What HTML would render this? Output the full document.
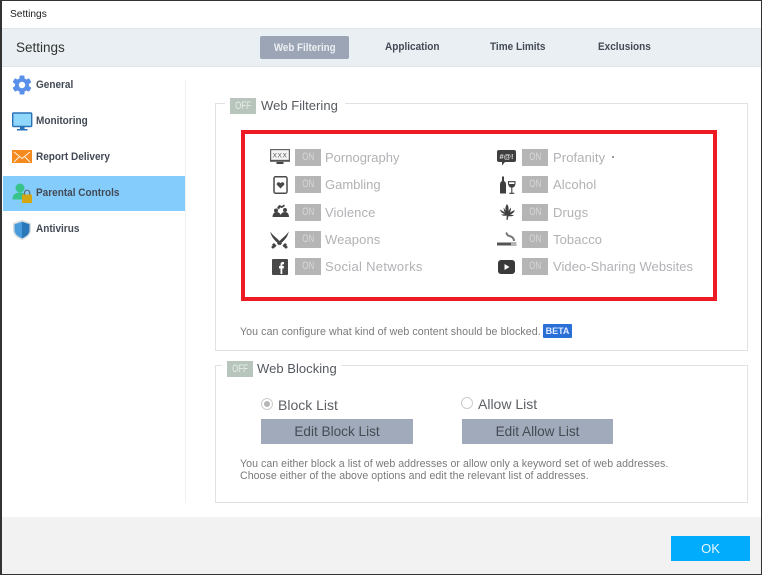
<!DOCTYPE html>
<html><head><meta charset="utf-8"><title>Settings</title>
<style>
html,body{margin:0;padding:0;background:#fff}
#w{position:relative;width:768px;height:576px;overflow:hidden;background:#fff;font-family:"Liberation Sans",sans-serif;filter:blur(.3px)}
#w div,#w svg{position:absolute}
.t{white-space:nowrap;line-height:16px;height:16px}
.nav,.tab{font-weight:bold;font-size:11px;color:#434a55;transform:scaleX(.91);transform-origin:left center}
.on{width:26px;height:17px;background:#b5b5b5;color:#d8d8d8;font-size:11px;line-height:17px;text-align:center}
.off{width:26px;height:16px;background:#b7c5bc;color:#e8eee9;font-size:11px;line-height:16px;text-align:center}
.on span,.off span{display:inline-block;transform:scaleX(.72)}
.l{font-size:13px;color:#b2b2b6;top:0;letter-spacing:.1px;margin-top:1px}
.c{font-size:10.6px;color:#7a7a7a;letter-spacing:.04px}
.lg{font-size:13px;color:#555a60;letter-spacing:.04px}
.b{background:#a0aaba;color:#454b55;font-size:13.6px;text-align:center;height:25px;line-height:25px;width:152px}
.g{background:#fff}
</style></head><body><div id="w">
<div style="left:0;top:0;width:762px;height:1px;background:#333"></div>
<div style="left:0;top:0;width:2px;height:575px;background:#333"></div>
<div style="left:761px;top:0;width:1px;height:575px;background:#333"></div>
<div style="left:0;top:574px;width:762px;height:1px;background:#333"></div>
<div class="t" style="left:10px;top:7px;font-size:10.2px;color:#222">Settings</div>

<div style="left:2px;top:28px;width:759px;height:37px;background:#e9eff2;border-top:1px solid #dfe5e8;border-bottom:1px solid #dfe5e8"></div>
<div class="t" style="left:16px;top:40px;font-size:13.5px;color:#333">Settings</div>
<div style="left:260px;top:36px;width:89px;height:23px;background:#9ba5b6;border-radius:2px;color:#eef0f3;font-weight:bold;font-size:11px;line-height:24px;text-align:center"><span style="display:inline-block;transform:scaleX(.89)">Web Filtering</span></div>
<div class="t tab" style="left:385px;top:39px">Application</div>
<div class="t tab" style="left:490px;top:39px">Time Limits</div>
<div class="t tab" style="left:598px;top:39px">Exclusions</div>

<!-- sidebar -->
<div style="left:3px;top:176px;width:182px;height:35px;background:#84ccfb"></div>
<div style="left:185px;top:80px;width:1px;height:423px;background:#f0f0f0"></div>
<svg style="left:12px;top:75px" width="20" height="20" viewBox="0 0 20 20"><g fill="#5a90ea"><g id="gt"><rect x="7.500" y="0.500" width="5" height="19" rx="1"/><rect x="7.500" y="0.500" width="5" height="19" rx="1" transform="rotate(60 10 10)"/><rect x="7.500" y="0.500" width="5" height="19" rx="1" transform="rotate(120 10 10)"/></g><circle cx="10" cy="10" r="7"/></g><circle cx="10" cy="10" r="3.200" fill="#fff"/></svg>
<div class="t nav" style="left:36px;top:77px">General</div>
<svg style="left:12px;top:112px" width="21" height="20" viewBox="0 0 21 20"><rect x="0.700" y="1" width="19" height="13.500" rx="1" fill="#8fd8fb" stroke="#2a72b8" stroke-width="1.400"/><path fill="#2a72b8" d="M8 15h4.500v2H15.500v1.500H5V17H8z"/></svg>
<div class="t nav" style="left:36px;top:113px">Monitoring</div>
<svg style="left:12px;top:150px" width="20" height="14" viewBox="0 0 20 14"><rect width="20" height="13" fill="#f58a1f"/><path d="M2 2l8 6.500L18 2M2 12l5.500-5.500M18 12l-5.500-5.500" fill="none" stroke="#fff0e0" stroke-width="1"/></svg>
<div class="t nav" style="left:36px;top:149px">Report Delivery</div>
<svg style="left:12px;top:183px" width="21" height="21" viewBox="0 0 21 21"><circle cx="8" cy="5" r="4.500" fill="#36c48c"/><path fill="#36c48c" d="M0.500 16.500c0-5 3-7 7.500-7 2 0 3.500.5 4.500 1.500V16.500z"/><path d="M12.500 12V9.800a2.600 2.600 0 0 1 5.200 0V12" fill="none" stroke="#5a6a70" stroke-width="1.200"/><rect x="10" y="11.500" width="10" height="8.500" fill="#d4a514"/></svg>
<div class="t nav" style="left:36px;top:185px">Parental Controls</div>
<svg style="left:13px;top:220px" width="18" height="20" viewBox="0 0 18 20"><path fill="#d8dde0" d="M9 0l9 3v7c0 5-4 8-9 10-5-2-9-5-9-10V3z"/><path fill="#4a9bdb" d="M9 1.800l7.500 2.400V10c0 4-3.200 6.500-7.500 8.300C4.700 16.500 1.500 14 1.500 10V4.200z"/><path fill="#2a78ba" d="M9 1.800l7.500 2.400V10c0 4-3.200 6.500-7.500 8.300z"/></svg>
<div class="t nav" style="left:36px;top:221px">Antivirus</div>

<!-- web filtering -->
<div style="left:215px;top:103px;width:531px;height:246px;border:1px solid #e2e2e2"></div>
<div class="g" style="left:225px;top:98px;width:120px;height:12px"></div>
<div class="off" style="left:230px;top:98px"><span>OFF</span></div>
<div class="t lg" style="left:261px;top:98px">Web Filtering</div>

<div style="left:241px;top:130px;width:468px;height:163px;border:4px solid #ed1c24"></div>

<svg style="left:270px;top:149px" width="20" height="16" viewBox="0 0 20 16"><rect x=".6" y=".6" width="18.800" height="10.800" fill="#f4f4f4" stroke="#666" stroke-width="1.200"/><text x="10" y="8.500" font-size="6.500" font-family="Liberation Sans" text-anchor="middle" fill="#555" letter-spacing=".6">XXX</text><rect x="0" y="11" width="20" height="1.800" fill="#555"/><path d="M6.500 13h7v2h-7z" fill="#444"/></svg>
<div class="on" style="left:295px;top:149px"><span>ON</span></div><div class="t l" style="left:325px;top:149px;letter-spacing:0">Pornography</div>
<svg style="left:273px;top:176px" width="15" height="18" viewBox="0 0 15 18"><rect x="1" y=".8" width="13" height="16.400" rx="1.500" fill="#fff" stroke="#4a4a4a" stroke-width="1.500"/><path fill="#4a4a4a" d="M7.500 12.500L3.800 8.800C3 6.800 5.800 5 7.500 7.200 9.200 5 12 6.800 11.200 8.800z"/></svg>
<div class="on" style="left:295px;top:176px"><span>ON</span></div><div class="t l" style="left:325px;top:176px;letter-spacing:0">Gambling</div>
<svg style="left:272px;top:204px" width="17" height="15" viewBox="0 0 17 15"><g fill="#444"><circle cx="4" cy="6.500" r="2"/><path d="M.5 13c0-3 1.800-5 4-5s4 1.500 4 3.500V13z"/><circle cx="13" cy="6" r="2"/><path d="M8 13c0-3 2.500-5 5-5s4 2 4 5z"/><path d="M5 4l2-3 3 1 2-1.500 1 1.500-3 2-2-.5-1 2z"/></g></svg>
<div class="on" style="left:295px;top:204px"><span>ON</span></div><div class="t l" style="left:325px;top:204px">Violence</div>
<svg style="left:270px;top:231px" width="19" height="18" viewBox="0 0 19 18"><g fill="#444"><path d="M.3 .5C2.500 4 6 6.500 8.500 9l3.500 3.500-1.800 1.800L6.500 11C3.500 8 1 5 .3 .5z"/><path d="M18.700 .5C16.500 4 13 6.500 10.500 9L7 12.500l1.800 1.800L12.500 11C15.500 8 18 5 18.700 .5z"/><path d="M2 13.500l2-1.500 2.500 2.500-1.500 2zM17 13.500l-2-1.500-2.500 2.500 1.500 2z"/><circle cx="3" cy="16" r="1.500"/><circle cx="16" cy="16" r="1.500"/></g></svg>
<div class="on" style="left:295px;top:231px"><span>ON</span></div><div class="t l" style="left:325px;top:231px">Weapons</div>
<svg style="left:272px;top:259px" width="16" height="16" viewBox="0 0 16 16"><rect width="16" height="16" rx="1" fill="#484848"/><path fill="#fff" d="M8.500 15V9.500H7V7h1.500V5.500C8.500 3.700 9.500 3 11 3H12V5.200h-.8c-.7 0-.9.300-.9.900V7H12l-.3 2.500h-1.400V15z"/></svg>
<div class="on" style="left:295px;top:258px"><span>ON</span></div><div class="t l" style="left:325px;top:258px;letter-spacing:.3px">Social Networks</div>

<svg style="left:497px;top:149px" width="19" height="18" viewBox="0 0 19 18"><path fill="#3f3f3f" d="M2 1h15A2 2 0 0 1 19 3v8a2 2 0 0 1-2 2H8l-3 3.500V13H2A2 2 0 0 1 0 11V3A2 2 0 0 1 2 1z"/><text x="9.500" y="10" font-size="7.500" font-weight="bold" font-family="Liberation Sans" text-anchor="middle" fill="#ddd">#@!</text></svg>
<div class="on" style="left:522px;top:149px"><span>ON</span></div><div class="t l" style="left:553px;top:149px">Profanity</div>
<div style="left:612px;top:156px;width:2px;height:2px;background:#777;border-radius:50%"></div>
<svg style="left:499px;top:176px" width="17" height="18" viewBox="0 0 17 18"><path fill="#3f3f3f" d="M3 .500h2V5c1.500.8 2 2 2 3.500V17.500H1V8.500C1 7 1.500 5.800 3 5z"/><path fill="none" stroke="#3f3f3f" stroke-width="1.100" d="M9.500 5.700h6.500c.300 3.500-1 5.300-3.200 5.300S9.200 9.200 9.500 5.700zM12.800 11v6M10.300 17.300h5"/><path fill="#3f3f3f" d="M10 8h5.500c-.3 1.800-1.200 2.800-2.700 2.800S10.300 9.800 10 8z"/></svg>
<div class="on" style="left:522px;top:176px"><span>ON</span></div><div class="t l" style="left:553px;top:176px">Alcohol</div>
<svg style="left:498px;top:204px" width="18" height="16" viewBox="0 0 18 16"><path fill="#3f3f3f" d="M9 0c1.500 2 2 4.500 1.300 7L13 3.500c.2 1.800-.3 3.800-1.300 5l5-2.500c-.5 2.500-2.500 4-4.800 4.500l4.300.8c-1.800 1-4 1.300-5.700.7L9.500 16h-1l.2-4.500c-1.700.6-3.900.3-5.700-.7l4.300-.8C4.500 9.500 2.500 8 2 5.500l5 3C6 7.300 5.500 5.300 5.700 3.500L7.700 7C7 4.500 7.500 2 9 0z"/></svg>
<div class="on" style="left:522px;top:204px"><span>ON</span></div><div class="t l" style="left:553px;top:204px">Drugs</div>
<svg style="left:497px;top:231px" width="20" height="17" viewBox="0 0 20 17"><rect x="0" y="11.500" width="14" height="3" fill="#555"/><rect x="14" y="11" width="5.500" height="4" fill="#b5b5b5"/><path d="M10 1.500c-1 1.500.5 3 2.500 3.500s4.500 1.500 4.500 5" fill="none" stroke="#777" stroke-width="2"/></svg>
<div class="on" style="left:522px;top:231px"><span>ON</span></div><div class="t l" style="left:553px;top:231px">Tobacco</div>
<svg style="left:498px;top:260px" width="17" height="14" viewBox="0 0 17 14"><rect width="17" height="14" rx="3" fill="#3a3a3a"/><path fill="#fff" d="M6.500 4l5 3-5 3z"/></svg>
<div class="on" style="left:522px;top:258px"><span>ON</span></div><div class="t l" style="left:553px;top:258px;letter-spacing:.05px">Video-Sharing Websites</div>

<div class="t c" style="left:240px;top:324px;letter-spacing:.09px">You can configure what kind of web content should be blocked.</div>
<div style="left:543px;top:324px;width:29px;height:14px;background:#2a6fd6;border-radius:1px;color:#dfeaff;font-weight:bold;font-size:9px;line-height:14px;text-align:center">BETA</div>

<!-- web blocking -->
<div style="left:215px;top:365px;width:531px;height:136px;border:1px solid #e2e2e2"></div>
<div class="g" style="left:222px;top:360px;width:119px;height:12px"></div>
<div class="off" style="left:227px;top:361px"><span>OFF</span></div>
<div class="t lg" style="left:257px;top:361px">Web Blocking</div>

<div style="left:261px;top:398px;width:10px;height:10px;border:1px solid #ccc;border-radius:50%"></div>
<div style="left:264px;top:401px;width:6px;height:6px;background:#b5b5b5;border-radius:50%"></div>
<div class="t" style="left:278px;top:397px;font-size:14px;color:#5c5f66">Block List</div>
<div style="left:461px;top:397px;width:10px;height:10px;border:1px solid #ccc;border-radius:50%"></div>
<div class="t" style="left:478px;top:396px;font-size:14px;color:#5c5f66">Allow List</div>
<div class="b" style="left:261px;top:419px">Edit Block List</div>
<div class="b" style="left:462px;top:419px;width:151px">Edit Allow List</div>
<div class="t c" style="left:240px;top:456px">You can either block a list of web addresses or allow only a keyword set of web addresses.</div>
<div class="t c" style="left:240px;top:468px">Choose either of the above options and edit the relevant list of addresses.</div>

<!-- footer -->
<div style="left:2px;top:517px;width:759px;height:57px;background:#f2f2f2"></div>
<div style="left:671px;top:536px;width:79px;height:25px;background:#00acfb;color:#e6f6ff;font-size:13px;line-height:25px;text-align:center">OK</div>
</div></body></html>
